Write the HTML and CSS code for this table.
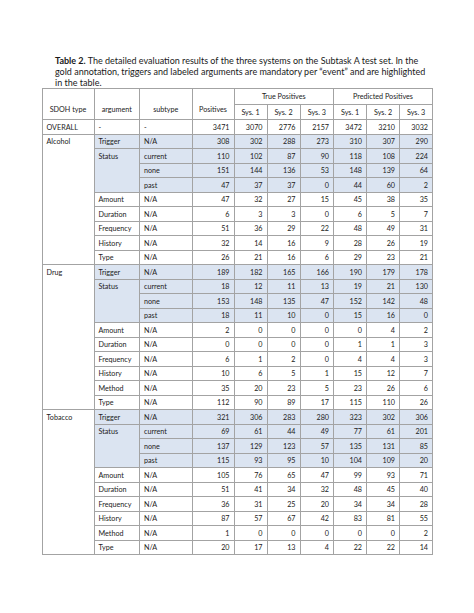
FILE: index.html
```html
<!DOCTYPE html>
<html>
<head>
<meta charset="utf-8">
<link rel="stylesheet" href="styles.css">
</head>
<body>
<div class="page">
  <p class="caption"><b>Table 2.</b> The detailed evaluation results of the three systems on the Subtask A test set. In the<br>gold annotation, triggers and labeled arguments are mandatory per “event” and are highlighted<br>in the table.</p>
  <table class="results">
    <colgroup>
      <col class="c-type"><col class="c-arg"><col class="c-sub"><col class="c-pos">
      <col class="c-sys"><col class="c-sys"><col class="c-sys3">
      <col class="c-sys"><col class="c-sys"><col class="c-sys">
    </colgroup>
    <thead>
      <tr class="h1">
        <th rowspan="2" class="hb">SDOH type</th>
        <th rowspan="2" class="hb">argument</th>
        <th rowspan="2" class="hb">subtype</th>
        <th rowspan="2" class="hb">Positives</th>
        <th colspan="3" class="sep">True Positives</th>
        <th colspan="3" class="sep">Predicted Positives</th>
      </tr>
      <tr class="h2">
        <th class="sep">Sys. 1</th><th>Sys. 2</th><th>Sys. 3</th>
        <th class="sep">Sys. 1</th><th>Sys. 2</th><th>Sys. 3</th>
      </tr>
    </thead>
    <tbody>
      <tr><td>OVERALL</td><td>-</td><td>-</td><td class="n">3471</td><td class="n sep">3070</td><td class="n">2776</td><td class="n">2157</td><td class="n sep">3472</td><td class="n">3210</td><td class="n">3032</td></tr>

      <tr class="hl"><td rowspan="9" class="grp">Alcohol</td><td>Trigger</td><td>N/A</td><td class="n">308</td><td class="n sep">302</td><td class="n">288</td><td class="n">273</td><td class="n sep">310</td><td class="n">307</td><td class="n">290</td></tr>
      <tr class="hl"><td rowspan="3">Status</td><td>current</td><td class="n">110</td><td class="n sep">102</td><td class="n">87</td><td class="n">90</td><td class="n sep">118</td><td class="n">108</td><td class="n">224</td></tr>
      <tr class="hl"><td>none</td><td class="n">151</td><td class="n sep">144</td><td class="n">136</td><td class="n">53</td><td class="n sep">148</td><td class="n">139</td><td class="n">64</td></tr>
      <tr class="hl"><td>past</td><td class="n">47</td><td class="n sep">37</td><td class="n">37</td><td class="n">0</td><td class="n sep">44</td><td class="n">60</td><td class="n">2</td></tr>
      <tr><td>Amount</td><td>N/A</td><td class="n">47</td><td class="n sep">32</td><td class="n">27</td><td class="n">15</td><td class="n sep">45</td><td class="n">38</td><td class="n">35</td></tr>
      <tr><td>Duration</td><td>N/A</td><td class="n">6</td><td class="n sep">3</td><td class="n">3</td><td class="n">0</td><td class="n sep">6</td><td class="n">5</td><td class="n">7</td></tr>
      <tr><td>Frequency</td><td>N/A</td><td class="n">51</td><td class="n sep">36</td><td class="n">29</td><td class="n">22</td><td class="n sep">48</td><td class="n">49</td><td class="n">31</td></tr>
      <tr><td>History</td><td>N/A</td><td class="n">32</td><td class="n sep">14</td><td class="n">16</td><td class="n">9</td><td class="n sep">28</td><td class="n">26</td><td class="n">19</td></tr>
      <tr><td>Type</td><td>N/A</td><td class="n">26</td><td class="n sep">21</td><td class="n">16</td><td class="n">6</td><td class="n sep">29</td><td class="n">23</td><td class="n">21</td></tr>

      <tr class="hl"><td rowspan="10" class="grp">Drug</td><td>Trigger</td><td>N/A</td><td class="n">189</td><td class="n sep">182</td><td class="n">165</td><td class="n">166</td><td class="n sep">190</td><td class="n">179</td><td class="n">178</td></tr>
      <tr class="hl"><td rowspan="3">Status</td><td>current</td><td class="n">18</td><td class="n sep">12</td><td class="n">11</td><td class="n">13</td><td class="n sep">19</td><td class="n">21</td><td class="n">130</td></tr>
      <tr class="hl"><td>none</td><td class="n">153</td><td class="n sep">148</td><td class="n">135</td><td class="n">47</td><td class="n sep">152</td><td class="n">142</td><td class="n">48</td></tr>
      <tr class="hl"><td>past</td><td class="n">18</td><td class="n sep">11</td><td class="n">10</td><td class="n">0</td><td class="n sep">15</td><td class="n">16</td><td class="n">0</td></tr>
      <tr><td>Amount</td><td>N/A</td><td class="n">2</td><td class="n sep">0</td><td class="n">0</td><td class="n">0</td><td class="n sep">0</td><td class="n">4</td><td class="n">2</td></tr>
      <tr><td>Duration</td><td>N/A</td><td class="n">0</td><td class="n sep">0</td><td class="n">0</td><td class="n">0</td><td class="n sep">1</td><td class="n">1</td><td class="n">3</td></tr>
      <tr><td>Frequency</td><td>N/A</td><td class="n">6</td><td class="n sep">1</td><td class="n">2</td><td class="n">0</td><td class="n sep">4</td><td class="n">4</td><td class="n">3</td></tr>
      <tr><td>History</td><td>N/A</td><td class="n">10</td><td class="n sep">6</td><td class="n">5</td><td class="n">1</td><td class="n sep">15</td><td class="n">12</td><td class="n">7</td></tr>
      <tr><td>Method</td><td>N/A</td><td class="n">35</td><td class="n sep">20</td><td class="n">23</td><td class="n">5</td><td class="n sep">23</td><td class="n">26</td><td class="n">6</td></tr>
      <tr><td>Type</td><td>N/A</td><td class="n">112</td><td class="n sep">90</td><td class="n">89</td><td class="n">17</td><td class="n sep">115</td><td class="n">110</td><td class="n">26</td></tr>

      <tr class="hl"><td rowspan="10" class="grp">Tobacco</td><td>Trigger</td><td>N/A</td><td class="n">321</td><td class="n sep">306</td><td class="n">283</td><td class="n">280</td><td class="n sep">323</td><td class="n">302</td><td class="n">306</td></tr>
      <tr class="hl"><td rowspan="3">Status</td><td>current</td><td class="n">69</td><td class="n sep">61</td><td class="n">44</td><td class="n">49</td><td class="n sep">77</td><td class="n">61</td><td class="n">201</td></tr>
      <tr class="hl"><td>none</td><td class="n">137</td><td class="n sep">129</td><td class="n">123</td><td class="n">57</td><td class="n sep">135</td><td class="n">131</td><td class="n">85</td></tr>
      <tr class="hl"><td>past</td><td class="n">115</td><td class="n sep">93</td><td class="n">95</td><td class="n">10</td><td class="n sep">104</td><td class="n">109</td><td class="n">20</td></tr>
      <tr><td>Amount</td><td>N/A</td><td class="n">105</td><td class="n sep">76</td><td class="n">65</td><td class="n">47</td><td class="n sep">99</td><td class="n">93</td><td class="n">71</td></tr>
      <tr><td>Duration</td><td>N/A</td><td class="n">51</td><td class="n sep">41</td><td class="n">34</td><td class="n">32</td><td class="n sep">48</td><td class="n">45</td><td class="n">40</td></tr>
      <tr><td>Frequency</td><td>N/A</td><td class="n">36</td><td class="n sep">31</td><td class="n">25</td><td class="n">20</td><td class="n sep">34</td><td class="n">34</td><td class="n">28</td></tr>
      <tr><td>History</td><td>N/A</td><td class="n">87</td><td class="n sep">57</td><td class="n">67</td><td class="n">42</td><td class="n sep">83</td><td class="n">81</td><td class="n">55</td></tr>
      <tr><td>Method</td><td>N/A</td><td class="n">1</td><td class="n sep">0</td><td class="n">0</td><td class="n">0</td><td class="n sep">0</td><td class="n">0</td><td class="n">2</td></tr>
      <tr><td>Type</td><td>N/A</td><td class="n">20</td><td class="n sep">17</td><td class="n">13</td><td class="n">4</td><td class="n sep">22</td><td class="n">22</td><td class="n">14</td></tr>
    </tbody>
  </table>
</div>
</body>
</html>
```
FILE: styles.css
```css
html, body {
  margin: 0;
  padding: 0;
  background: #ffffff;
}

.page {
  width: 474px;
  height: 613px;
  padding-top: 56px;
  box-sizing: border-box;
  font-family: Lato, "Liberation Sans", sans-serif;
  color: #1a1a1a;
}

.caption {
  margin: 0 0 0 55px;
  font-size: 9px;
  line-height: 10.8px;
  white-space: nowrap;
}

.caption b {
  font-weight: 700;
}

.results {
  margin-left: 41.5px;
  width: 391px;
  table-layout: fixed;
  border-collapse: collapse;
  font-size: 7.2px;
  color: #222222;
  border: 1px solid #9a9a9a;
}

.c-type { width: 52px; }
.c-arg { width: 45.5px; }
.c-sub { width: 52.5px; }
.c-pos { width: 42px; }
.c-sys { width: 33px; }
.c-sys3 { width: 33.5px; }

.results th,
.results td {
  border: 1px solid #a3a3a3;
  padding: 0 4px;
  white-space: nowrap;
  overflow: hidden;
}

.results th {
  font-weight: 400;
  text-align: center;
  line-height: 9px;
}

.h1 {
  height: 15.5px;
}

.h2 {
  height: 15.5px;
}

.h1 th,
.h2 th {
  vertical-align: middle;
}

.h1 th.hb {
  vertical-align: bottom;
  padding-bottom: 5px;
}

.results tbody tr {
  height: 14.5px;
}

.results td {
  line-height: 9px;
  padding-top: 2.5px;
  padding-bottom: 0;
  vertical-align: top;
  text-align: left;
}

.results td.n {
  text-align: right;
}

.results .sep {
  border-left: 1.5px solid #4d4d4d;
}

.hl td {
  background: #dbe4f1;
}

.hl td.grp {
  background: #ffffff;
}
```
